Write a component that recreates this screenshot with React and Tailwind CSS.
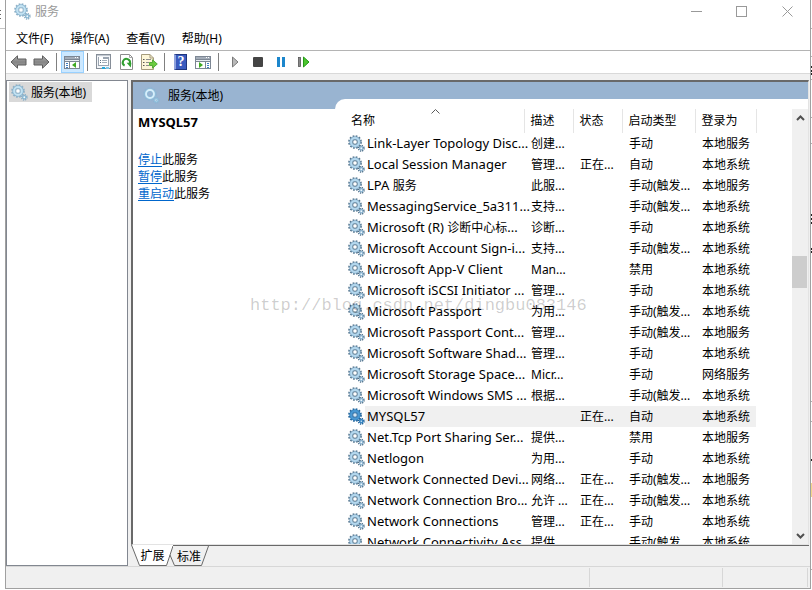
import React, { useState } from 'react'

const MENUS = ['文件(F)', '操作(A)', '查看(V)', '帮助(H)']

const COLUMNS = [
  { key: 'name',    label: '名称',     width: 'w-[180px]' },
  { key: 'desc',    label: '描述',     width: 'w-[49px]' },
  { key: 'status',  label: '状态',     width: 'w-[49px]' },
  { key: 'startup', label: '启动类型', width: 'w-[73px]' },
  { key: 'logon',   label: '登录为',   width: 'w-[61px]' },
]

const SERVICES = [
  { name: 'Link-Layer Topology Disc...', desc: '创建...', status: '',        startup: '手动',         logon: '本地服务' },
  { name: 'Local Session Manager',       desc: '管理...', status: '正在...', startup: '自动',         logon: '本地系统' },
  { name: 'LPA 服务',                    desc: '此服...', status: '',        startup: '手动(触发...', logon: '本地服务' },
  { name: 'MessagingService_5a311...',   desc: '支持...', status: '',        startup: '手动(触发...', logon: '本地系统' },
  { name: 'Microsoft (R) 诊断中心标...', desc: '诊断...', status: '',        startup: '手动',         logon: '本地系统' },
  { name: 'Microsoft Account Sign-i...', desc: '支持...', status: '',        startup: '手动(触发...', logon: '本地系统' },
  { name: 'Microsoft App-V Client',      desc: 'Man...',  status: '',        startup: '禁用',         logon: '本地系统' },
  { name: 'Microsoft iSCSI Initiator ...', desc: '管理...', status: '',      startup: '手动',         logon: '本地系统' },
  { name: 'Microsoft Passport',          desc: '为用...', status: '',        startup: '手动(触发...', logon: '本地系统' },
  { name: 'Microsoft Passport Cont...',  desc: '管理...', status: '',        startup: '手动(触发...', logon: '本地服务' },
  { name: 'Microsoft Software Shad...',  desc: '管理...', status: '',        startup: '手动',         logon: '本地系统' },
  { name: 'Microsoft Storage Space...',  desc: 'Micr...', status: '',        startup: '手动',         logon: '网络服务' },
  { name: 'Microsoft Windows SMS ...',   desc: '根据...', status: '',        startup: '手动(触发...', logon: '本地系统' },
  { name: 'MYSQL57',                     desc: '',        status: '正在...', startup: '自动',         logon: '本地系统' },
  { name: 'Net.Tcp Port Sharing Ser...', desc: '提供...', status: '',        startup: '禁用',         logon: '本地服务' },
  { name: 'Netlogon',                    desc: '为用...', status: '',        startup: '手动',         logon: '本地系统' },
  { name: 'Network Connected Devi...',   desc: '网络...', status: '正在...', startup: '手动(触发...', logon: '本地服务' },
  { name: 'Network Connection Bro...',   desc: '允许 ...', status: '正在...', startup: '手动(触发...', logon: '本地系统' },
  { name: 'Network Connections',         desc: '管理...', status: '正在...', startup: '手动',         logon: '本地系统' },
  { name: 'Network Connectivity Ass...', desc: '提供...', status: '',        startup: '手动(触发...', logon: '本地系统' },
]

const GEAR_TONES = {
  normal: { tooth: '#4f7089', rim: '#86aecb', face: '#b4d8ee', hole: '#ffffff' },
  light:  { tooth: '#8fb0c6', rim: '#86b4d0', face: '#c3e2f2', hole: '#ffffff' },
  header: { tooth: '#8db4d2', rim: '#8fc0dd', face: '#d6eefa', hole: '#9ab3d1' },
  active: { tooth: '#1f5f95', rim: '#2f7fbd', face: '#4a98d2', hole: '#d5e6f3' },
}

function Gears({ tone = 'normal' }) {
  const c = GEAR_TONES[tone]
  return (
    <svg className="h-[17px] w-[17px] shrink-0" viewBox="0 0 17 17" aria-hidden="true">
      <circle cx="7" cy="7" r="5.9" fill="none" stroke={c.tooth} strokeWidth="1.9" strokeDasharray="1.7 1.39" />
      <circle cx="7" cy="7" r="4.1" fill="none" stroke={c.rim} strokeWidth="3.2" />
      <circle cx="7" cy="7" r="3.9" fill="none" stroke={c.face} strokeWidth="2" />
      <circle cx="7" cy="7" r="2.3" fill={c.hole} stroke={c.tooth} strokeWidth="0.9" />
      <circle cx="13.3" cy="13.3" r="2.7" fill="none" stroke={c.tooth} strokeWidth="1.6" strokeDasharray="1.2 0.92" />
      <circle cx="13.3" cy="13.3" r="1.7" fill={c.face} stroke={c.rim} strokeWidth="1.2" />
      <circle cx="13.3" cy="13.3" r="0.7" fill={c.hole} />
    </svg>
  )
}

function Arrow({ forward }) {
  return (
    <svg className="h-[16px] w-[17px]" viewBox="0 0 17 16">
      <defs>
        <linearGradient id={forward ? 'arrF' : 'arrB'} x1="0" y1="0" x2="0" y2="1">
          <stop offset="0" stopColor="#b5b5b5" />
          <stop offset="0.5" stopColor="#858585" />
          <stop offset="1" stopColor="#a5a5a5" />
        </linearGradient>
      </defs>
      {forward
        ? <path d="M16 8 L9.5 1.8 V5 H1 V11 H9.5 V14.2 Z" fill="url(#arrF)" stroke="#5c5c5c" />
        : <path d="M1 8 L7.5 1.8 V5 H16 V11 H7.5 V14.2 Z" fill="url(#arrB)" stroke="#5c5c5c" />}
    </svg>
  )
}

// console window with a tree pane (left) or an action pane (right)
function PaneIcon({ side }) {
  const left = side === 'left'
  return (
    <svg className="h-[16px] w-[17px]" viewBox="0 0 17 16" shapeRendering="crispEdges">
      <rect x="0" y="2" width="16" height="13" fill="#7d8794" />
      <rect x="1" y="3" width="14" height="2" fill="#a3acb8" />
      <rect x="11" y="3" width="1" height="1" fill="#fff" />
      <rect x="13" y="3" width="1" height="1" fill="#fff" />
      <rect x="1" y="6" width="14" height="1" fill="#e8edf2" />
      <rect x="1" y="8" width="14" height="6" fill="#fff" />
      <rect x={left ? 5 : 10} y="8" width="1" height="6" fill="#7d8794" />
      {[9, 11, 13].map(y => (
        <rect key={y} x={left ? 2 : 12} y={y} width="2" height="1" fill="#3f7fc4" />
      ))}
      {left
        ? <path d="M12 8 V14 L8 11 Z" fill="#3faa22" shapeRendering="auto" />
        : <path d="M4 8 V14 L8 11 Z" fill="#3faa22" shapeRendering="auto" />}
    </svg>
  )
}

function PropertiesIcon() {
  return (
    <svg className="h-[16px] w-[15px]" viewBox="0 0 15 16" shapeRendering="crispEdges">
      <rect x="0" y="0" width="15" height="15" fill="#868e98" />
      <rect x="1" y="1" width="13" height="13" fill="#f3f5f8" />
      <rect x="1" y="1" width="13" height="1" fill="#c3c9d1" />
      <rect x="2" y="3" width="11" height="9" fill="#9aa4b0" />
      <rect x="3" y="5" width="9" height="6" fill="#fff" />
      <rect x="3" y="3" width="4" height="2" fill="#fff" />
      {[6, 8].map(y => (
        <React.Fragment key={y}>
          <rect x="4" y={y} width="1" height="1" fill="#5f6d7c" />
          <rect x="6" y={y} width="5" height="1" fill="#a3adb8" />
        </React.Fragment>
      ))}
      <rect x="6" y="13" width="3" height="2" fill="#22a7dc" />
      <rect x="10" y="13" width="3" height="2" fill="#7cc8e8" />
    </svg>
  )
}

function RefreshIcon() {
  return (
    <svg className="h-[16px] w-[14px]" viewBox="0 0 14 16">
      <path d="M0.5 0.5 H9.5 L12.5 3.5 V15.5 H0.5 Z" fill="#fff" stroke="#8c8c8c" />
      <path d="M9.5 0.5 V3.5 H12.5" fill="none" stroke="#a8a8a8" />
      <path d="M4.6 11.6 A3.6 3.6 0 1 1 9.8 9.6" fill="none" stroke="#2f9e2f" strokeWidth="2" />
      <path d="M6.6 8.8 L11.4 8.8 L10.8 13.4 Z" fill="#2f9e2f" />
    </svg>
  )
}

function ExportIcon() {
  return (
    <svg className="h-[16px] w-[17px]" viewBox="0 0 17 16">
      <path d="M0.5 0.5 H9 L12.5 4 V15.5 H0.5 Z" fill="#fdf6d8" stroke="#a59b7c" />
      <path d="M9 0.5 V4 H12.5" fill="none" stroke="#a59b7c" />
      <path d="M2 5.5 H3.5 M2 8.5 H3.5 M2 11.5 H3.5" stroke="#555" />
      <path d="M5 5.5 H10 M5 8.5 H8 M5 11.5 H8" stroke="#8d8d8d" />
      <path d="M8.5 8.5 H11.5 V5.8 L16.3 10 L11.5 14.2 V11.5 H8.5 Z" fill="#6ccb3f" stroke="#3d9e25" strokeWidth="0.8" />
    </svg>
  )
}

function HelpIcon() {
  return (
    <span className="flex h-[16px] w-[13px] items-center justify-center border border-l-2 border-[#1f357d] border-l-[#8fa2dc] bg-[#3a5bbf] font-['Liberation_Serif',serif] text-[14px] leading-none font-bold text-white">
      ?
    </span>
  )
}

function ControlIcon({ kind }) {
  return (
    <svg className="h-[12px] w-[12px]" viewBox="0 0 12 12">
      {kind === 'play' && <path d="M3.5 1 L9 6 L3.5 11 Z" fill="#b9b9b9" stroke="#7a7a7a" />}
      {kind === 'stop' && <rect x="1" y="1" width="10" height="10" rx="1" fill="#444" />}
      {kind === 'pause' && (
        <>
          <rect x="2" y="1" width="3" height="10" fill="#1c86cc" />
          <rect x="7" y="1" width="3" height="10" fill="#1c86cc" />
        </>
      )}
      {kind === 'restart' && (
        <>
          <rect x="0.5" y="1.5" width="2" height="9" fill="#8a8a8a" stroke="#555" strokeWidth="0.8" />
          <path d="M5.5 1 L11 6 L5.5 11 Z" fill="#4cc52f" stroke="#259a18" />
        </>
      )}
    </svg>
  )
}

function ToolButton({ label, active, children }) {
  return (
    <button
      type="button"
      aria-label={label}
      className={`flex h-[22px] w-[23px] items-center justify-center border
        ${active ? 'border-[#99d1ff] bg-[#cce8ff]' : 'border-transparent'}`}
    >
      {children}
    </button>
  )
}

function Divider() {
  return <span className="mr-[4px] ml-[3px] h-[18px] w-px bg-[#808080]" />
}

function TitleBar() {
  return (
    <header className="flex h-[24px] shrink-0 items-start pl-[8px]">
      <div className="flex h-[22px] flex-1 items-center gap-[4px] text-[#999999]">
        <Gears tone="light" />
        <h1>服务</h1>
      </div>
      <button type="button" aria-label="最小化" className="flex h-[22px] w-[46px] items-center justify-center">
        <svg className="h-[11px] w-[11px]" viewBox="0 0 11 11"><path d="M0 5.5 H11" stroke="#999" /></svg>
      </button>
      <button type="button" aria-label="最大化" className="flex h-[22px] w-[45px] items-center justify-center">
        <svg className="h-[11px] w-[11px]" viewBox="0 0 11 11"><rect x="0.5" y="0.5" width="10" height="10" fill="none" stroke="#999" /></svg>
      </button>
      <button type="button" aria-label="关闭" className="flex h-[22px] w-[46px] items-center justify-center">
        <svg className="h-[11px] w-[11px]" viewBox="0 0 11 11"><path d="M0.5 0.5 L10.5 10.5 M10.5 0.5 L0.5 10.5" stroke="#999" /></svg>
      </button>
    </header>
  )
}

function Toolbar() {
  return (
    <div className="flex h-[23px] shrink-0 items-center border-b border-[#d9d9d9] pl-px">
      <ToolButton label="后退"><Arrow /></ToolButton>
      <ToolButton label="前进"><Arrow forward /></ToolButton>
      <Divider />
      <ToolButton label="显示/隐藏控制台树" active><PaneIcon side="left" /></ToolButton>
      <Divider />
      <ToolButton label="属性"><PropertiesIcon /></ToolButton>
      <ToolButton label="刷新"><RefreshIcon /></ToolButton>
      <ToolButton label="导出列表"><ExportIcon /></ToolButton>
      <Divider />
      <ToolButton label="帮助"><HelpIcon /></ToolButton>
      <ToolButton label="显示/隐藏操作窗格"><PaneIcon side="right" /></ToolButton>
      <Divider />
      <ToolButton label="启动服务"><ControlIcon kind="play" /></ToolButton>
      <ToolButton label="停止服务"><ControlIcon kind="stop" /></ToolButton>
      <ToolButton label="暂停服务"><ControlIcon kind="pause" /></ToolButton>
      <ToolButton label="重启动服务"><ControlIcon kind="restart" /></ToolButton>
    </div>
  )
}

function ActionLink({ action }) {
  return (
    <p className="leading-[17px]">
      <a href="#" className="text-[#0066cc] underline underline-offset-2">{action}</a>此服务
    </p>
  )
}

// the Chinese part of a name is set one size smaller than the Latin part
function ServiceName({ name }) {
  return name.split(/([\u4e00-\u9fff]+)/).map((part, i) => (
    i % 2 ? <span key={i} className="text-[12px]">{part}</span> : part
  ))
}

function ServiceTable({ selected, onSelect }) {
  return (
    <table className="w-[412px] table-fixed border-collapse text-left whitespace-nowrap">
      <thead>
        <tr className="h-[24px]">
          {COLUMNS.map(col => (
            <th
              key={col.key}
              scope="col"
              className={`relative border-r border-[#e5e5e5] p-0 pb-[2px] font-normal ${col.width} ${col.key === 'name' ? 'pl-[7px]' : 'pl-[6px]'}`}
            >
              {col.label}
              {col.key === 'name' && (
                <svg className="absolute top-0 left-[87px] h-[5px] w-[9px]" viewBox="0 0 9 5">
                  <path d="M0.5 4.5 L4.5 0.5 L8.5 4.5" fill="none" stroke="#5a5a5a" />
                </svg>
              )}
            </th>
          ))}
        </tr>
      </thead>
      <tbody>
        {SERVICES.map(s => {
          const isSelected = s.name === selected
          const bg = isSelected ? 'bg-[#f0f0f0]' : ''
          return (
            <tr key={s.name} className="h-[21px]" onClick={() => onSelect(s.name)}>
              <td className="p-0">
                <div className="flex h-[21px] items-center pl-[4px]">
                  <Gears tone={isSelected ? 'active' : 'normal'} />
                  <span className={`h-[21px] flex-1 pl-[2px] text-[13px] leading-[21px] ${bg}`}>
                    <ServiceName name={s.name} />
                  </span>
                </div>
              </td>
              <td className={`p-0 pl-[7px] ${bg}`}>{s.desc}</td>
              <td className={`p-0 pl-[7px] ${bg}`}>{s.status}</td>
              <td className={`p-0 pl-[7px] ${bg}`}>{s.startup}</td>
              <td className={`p-0 pl-[7px] ${bg}`}>{s.logon}</td>
            </tr>
          )
        })}
      </tbody>
    </table>
  )
}

function ScrollBar() {
  return (
    <div className="flex w-[16px] shrink-0 flex-col bg-[#f0f0f0]">
      <button type="button" aria-label="向上滚动" className="flex h-[17px] items-center justify-center">
        <svg className="h-[6px] w-[9px]" viewBox="0 0 9 6"><path d="M1 5 L4.5 1.5 L8 5" fill="none" stroke="#505050" strokeWidth="2" /></svg>
      </button>
      <div className="flex flex-1 flex-col">
        <div className="grow-[130]" />
        <div className="h-[32px] w-[15px] bg-[#cdcdcd]" />
        <div className="grow-[239]" />
      </div>
      <button type="button" aria-label="向下滚动" className="flex h-[17px] items-center justify-center">
        <svg className="h-[6px] w-[9px]" viewBox="0 0 9 6"><path d="M1 1 L4.5 4.5 L8 1" fill="none" stroke="#505050" strokeWidth="2" /></svg>
      </button>
    </div>
  )
}

function ViewTabs() {
  return (
    <div className="flex h-[21px] shrink-0">
      <button type="button" className="relative h-[21px] w-[42px] pl-[1px]">
        <svg className="absolute inset-0 h-[21px] w-[42px]" viewBox="0 0 42 21">
          <path d="M0.5 0 L8.5 20.5 H35.5 L42 1 V0 Z" fill="#fff" />
          <path d="M0.5 0 L8.5 20.5 H35.5 L42 1" fill="none" stroke="#696969" />
        </svg>
        <span className="relative">扩展</span>
      </button>
      <div className="flex flex-1 border-t border-[#696969]">
        <button type="button" className="relative h-[20px] w-[36px] pr-[4px]">
          <svg className="absolute inset-0 h-[20px] w-[36px] overflow-visible" viewBox="0 0 36 20">
            <path d="M-3 9 L1.5 19.5 H28.5 L35.5 0" fill="none" stroke="#696969" />
          </svg>
          <span className="relative">标准</span>
        </button>
      </div>
    </div>
  )
}

// slivers of the window behind, seen past the left and right borders
function BackdropLeft() {
  return (
    <svg className="h-[30px] w-[5px] shrink-0" viewBox="0 0 5 30" shapeRendering="crispEdges" aria-hidden="true">
      <path d="M0 10.5 H1 M0 14.5 H1 M0 18.5 H1" stroke="#666" />
      <rect x="0" y="28" width="5" height="1" fill="#c4c4c4" />
    </svg>
  )
}

function BackdropRight() {
  return (
    <svg className="h-[589px] w-px shrink-0" viewBox="0 0 1 589" shapeRendering="crispEdges" aria-hidden="true">
      {[28, 56, 79, 117, 143, 401, 421, 569].map(y => (
        <rect key={y} x="0" y={y} width="1" height="1" fill="#b0b0b0" />
      ))}
      {[66, 70, 73, 214, 218, 222, 248, 251, 459].map(y => (
        <rect key={y} x="0" y={y} width="1" height="2" fill="#222" />
      ))}
      <rect x="0" y="483" width="1" height="14" fill="#f2d78a" />
    </svg>
  )
}

export default function App() {
  const [selected, setSelected] = useState('MYSQL57')

  return (
    <div className="relative flex h-screen overflow-hidden bg-white pb-px font-['Noto_Sans','Noto_Sans_CJK_SC',sans-serif] text-[12px] leading-[17px] text-black">
      <BackdropLeft />

      <div className="flex min-w-0 flex-1 flex-col border-x border-b border-[#a0a0a0]">
        <TitleBar />

        <nav className="flex h-[27px] shrink-0 items-center gap-[17px] border-b border-[#b4b4b4] pt-[3px] pl-[10px]">
          {MENUS.map(m => <button key={m} type="button">{m}</button>)}
        </nav>

        <Toolbar />

        <div className="flex min-h-0 flex-1 gap-[3px] bg-[#f0f0f0] pt-[6px] pr-px">
          {/* Console tree */}
          <aside className="w-[122px] shrink-0 border border-[#828790] bg-white p-[1px]">
            <button type="button" className="ml-[1px] flex h-[20px] items-center gap-[3px] bg-[#d9d9d9] pr-[6px] pl-[2px]">
              <Gears tone="light" />
              服务(本地)
            </button>
          </aside>

          {/* Result pane */}
          <main className="flex min-w-0 flex-1 flex-col">
            <div className="flex min-h-0 flex-1 flex-col border-t-2 border-r border-b border-l-2 border-[#696969] border-r-[#e3e3e3] border-b-[#e3e3e3] bg-white">
              <div className="flex h-[27px] shrink-0 bg-[#99b4d1]">
                <div className="flex w-[202px] items-center gap-[8px] pl-[10px]">
                  <Gears tone="header" />
                  服务(本地)
                </div>
                <div className="h-[10px] flex-1 self-end rounded-tl-[10px] bg-white" />
              </div>

              <div className="flex min-h-0 flex-1">
                <section className="w-[211px] shrink-0 pt-[5px] pl-[5px]">
                  <h2 className="text-[13px] leading-[17px] font-bold">MYSQL57</h2>
                  <div className="mt-[20px]">
                    <ActionLink action="停止" />
                    <ActionLink action="暂停" />
                    <ActionLink action="重启动" />
                  </div>
                </section>
                <section className="min-w-0 flex-1 overflow-hidden">
                  <ServiceTable selected={selected} onSelect={setSelected} />
                </section>
                <ScrollBar />
              </div>
            </div>
            <ViewTabs />
          </main>
        </div>

        <footer className="flex h-[22px] shrink-0 border-t border-[#d7d7d7] bg-[#f0f0f0] py-px pr-[2px]">
          <div className="flex-1 border-r border-[#d7d7d7]" />
          <div className="w-[133px] border-r border-[#d7d7d7]" />
          <div className="w-[85px] border-r border-[#d7d7d7]" />
        </footer>
      </div>

      <BackdropRight />

      <p className="pointer-events-none absolute top-[296px] left-[250px] font-['Liberation_Mono',monospace] text-[17px] leading-[20px] text-black/20">
        http://blog.csdn.net/dingbu083146
      </p>
    </div>
  )
}
